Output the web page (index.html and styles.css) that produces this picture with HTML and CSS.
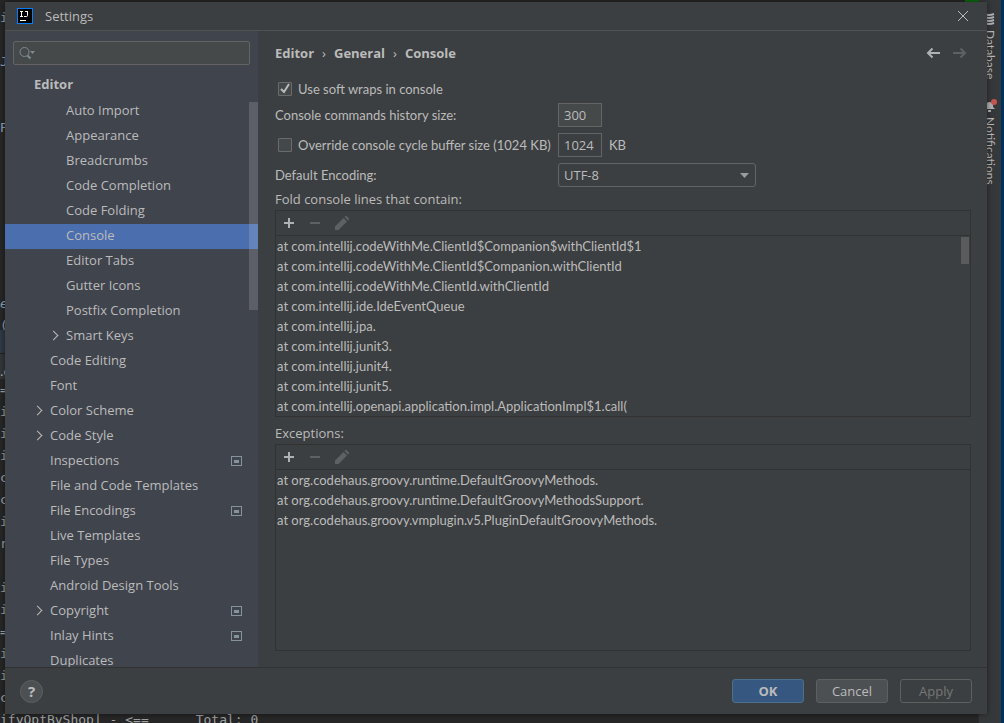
FILE: index.html
```html
<!DOCTYPE html>
<html lang="en">
<head>
    <meta charset="UTF-8">
    <meta name="viewport" content="width=device-width, initial-scale=1.0">
    <title>Settings</title>
    <link rel="stylesheet" href="styles.css">
</head>
<body>
    <div class="ide">
        <div class="editor">
            <pre class="code code-top">i

J


P







<span class="italic">e</span>
(</pre>
            <div class="panel-head"></div>
            <div class="panel-tabs">.c</div>
            <pre class="code">=
i
i
i
c
c
i
r

i
i
=
i
i
c
ifyOptByShop| - &lt;==      Total: 0</pre>
        </div>
        <div class="tool-bar">
            <svg width="12" height="14" viewBox="0 0 12 14"><path d="M0 2q5 2 10 0M0 5q5 2 10 0M0 8q5 2 10 0M0 11q5 2 10 0" fill="none" stroke="#afb1b3" stroke-width="2"/></svg>
            <span class="tool-name">Database</span>
            <svg class="bell" width="14" height="14" viewBox="0 0 14 14"><path d="M1 10l2-2V5a4 4 0 0 1 7 0v3l2 2zM5 11h3v2H5z" fill="#afb1b3"/><circle cx="11" cy="3" r="3" fill="#c75450"/></svg>
            <span class="tool-name">Notifications</span>
        </div>
        <div class="desktop-edge"></div>
        <div class="run-mark"></div>
    </div>

    <div class="dialog">
        <header class="title-bar">
            <svg width="16" height="16" viewBox="0 0 16 16"><rect x="0.5" y="0.5" width="15" height="15" fill="#000" stroke="#087cfa"/><path d="M3 3.500h3M3 8.500h3M4.500 3v5M8 3.500h3M10.500 3v4.500q0 1-1 1H7M3 12.500h6" fill="none" stroke="#fff"/></svg>
            <h1>Settings</h1>
            <button class="icon-btn" aria-label="Close">
                <svg width="12" height="12" viewBox="0 0 12 12"><path d="M1 1l10 10M11 1L1 11" fill="none" stroke="#bbb"/></svg>
            </button>
        </header>

        <div class="main">
            <nav class="sidebar">
                <label class="search">
                    <svg width="18" height="14" viewBox="0 0 18 14"><circle cx="5.500" cy="6" r="4.500" fill="none" stroke="#7f8b91"/><path d="M8.500 9.500l3 3" stroke="#7f8b91" stroke-width="2"/><path d="M11 5h5l-2.500 3z" fill="#7f8b91"/></svg>
                    <input type="text" aria-label="Search settings">
                </label>
                <h2>Editor</h2>
                <div class="tree-box">
                    <ul class="tree">
                        <li class="deep"><a href="#">Auto Import</a></li>
                        <li class="deep"><a href="#">Appearance</a></li>
                        <li class="deep"><a href="#">Breadcrumbs</a></li>
                        <li class="deep"><a href="#">Code Completion</a></li>
                        <li class="deep"><a href="#">Code Folding</a></li>
                        <li class="deep selected"><a href="#">Console</a></li>
                        <li class="deep"><a href="#">Editor Tabs</a></li>
                        <li class="deep"><a href="#">Gutter Icons</a></li>
                        <li class="deep"><a href="#">Postfix Completion</a></li>
                        <li class="deep parent"><a href="#">Smart Keys</a></li>
                        <li><a href="#">Code Editing</a></li>
                        <li><a href="#">Font</a></li>
                        <li class="parent"><a href="#">Color Scheme</a></li>
                        <li class="parent"><a href="#">Code Style</a></li>
                        <li class="project"><a href="#">Inspections</a></li>
                        <li><a href="#">File and Code Templates</a></li>
                        <li class="project"><a href="#">File Encodings</a></li>
                        <li><a href="#">Live Templates</a></li>
                        <li><a href="#">File Types</a></li>
                        <li><a href="#">Android Design Tools</a></li>
                        <li class="parent project"><a href="#">Copyright</a></li>
                        <li class="project"><a href="#">Inlay Hints</a></li>
                        <li><a href="#">Duplicates</a></li>
                    </ul>
                    <div class="tree-thumb"></div>
                </div>
            </nav>

            <section class="content">
                <div class="crumbs">
                    <a href="#">Editor</a><span>›</span><a href="#">General</a><span>›</span><a href="#">Console</a>
                    <div class="history">
                        <button class="icon-btn" aria-label="Back"><svg width="14" height="12" viewBox="0 0 14 12"><path d="M14 6H2M6.500 1.500L2 6l4.500 4.500" fill="none" stroke="#afb1b3" stroke-width="2"/></svg></button>
                        <button class="icon-btn" aria-label="Forward" disabled><svg width="14" height="12" viewBox="0 0 14 12"><path d="M0 6h12M7.500 1.500L12 6l-4.500 4.500" fill="none" stroke="#5e6163" stroke-width="2"/></svg></button>
                    </div>
                </div>

                <div class="form">
                    <div class="check wide"><input type="checkbox" id="wraps" checked><label for="wraps">Use soft wraps in console</label></div>
                    <label for="history">Console commands history size:</label>
                    <div><input class="num filled" type="text" id="history" value="300"></div>
                    <div class="check"><input type="checkbox" id="override"><label for="override">Override console cycle buffer size (1024 KB)</label></div>
                    <div><input class="num" type="text" id="buffer" value="1024" aria-label="Buffer size"><label class="unit" for="buffer">KB</label></div>
                    <label for="encoding">Default Encoding:</label>
                    <div><select id="encoding"><option>UTF-8</option></select></div>
                </div>

                <h3>Fold console lines that contain:</h3>
                <div class="list-box fold">
                    <div class="list-tools">
                        <button class="icon-btn" aria-label="Add"><svg width="12" height="12" viewBox="0 0 12 12"><path d="M1 6h10M6 1v10" stroke="#afb1b3" stroke-width="2"/></svg></button>
                        <button class="icon-btn" aria-label="Remove" disabled><svg width="12" height="12" viewBox="0 0 12 12"><path d="M1 6h10" stroke="#5e6163" stroke-width="2"/></svg></button>
                        <button class="icon-btn" aria-label="Edit" disabled><svg width="14" height="14" viewBox="0 0 14 14"><path d="M0 14v-3.500L8.500 2 12 5.500 3.500 14zM9.500 1l1-1h1L14 2.500v1l-1 1z" fill="#5e6163"/></svg></button>
                    </div>
                    <ul>
                        <li>at com.intellij.codeWithMe.ClientId$Companion$withClientId$1</li>
                        <li>at com.intellij.codeWithMe.ClientId$Companion.withClientId</li>
                        <li>at com.intellij.codeWithMe.ClientId.withClientId</li>
                        <li>at com.intellij.ide.IdeEventQueue</li>
                        <li>at com.intellij.jpa.</li>
                        <li>at com.intellij.junit3.</li>
                        <li>at com.intellij.junit4.</li>
                        <li>at com.intellij.junit5.</li>
                        <li>at com.intellij.openapi.application.impl.ApplicationImpl$1.call(</li>
                    </ul>
                    <div class="list-thumb"></div>
                </div>

                <h3>Exceptions:</h3>
                <div class="list-box">
                    <div class="list-tools">
                        <button class="icon-btn" aria-label="Add"><svg width="12" height="12" viewBox="0 0 12 12"><path d="M1 6h10M6 1v10" stroke="#afb1b3" stroke-width="2"/></svg></button>
                        <button class="icon-btn" aria-label="Remove" disabled><svg width="12" height="12" viewBox="0 0 12 12"><path d="M1 6h10" stroke="#5e6163" stroke-width="2"/></svg></button>
                        <button class="icon-btn" aria-label="Edit" disabled><svg width="14" height="14" viewBox="0 0 14 14"><path d="M0 14v-3.500L8.500 2 12 5.500 3.500 14zM9.500 1l1-1h1L14 2.500v1l-1 1z" fill="#5e6163"/></svg></button>
                    </div>
                    <ul>
                        <li>at org.codehaus.groovy.runtime.DefaultGroovyMethods.</li>
                        <li>at org.codehaus.groovy.runtime.DefaultGroovyMethodsSupport.</li>
                        <li>at org.codehaus.groovy.vmplugin.v5.PluginDefaultGroovyMethods.</li>
                    </ul>
                </div>
            </section>
        </div>

        <footer class="footer">
            <button class="help-btn" aria-label="Help">?</button>
            <button class="btn primary">OK</button>
            <button class="btn">Cancel</button>
            <button class="btn ghost" disabled>Apply</button>
        </footer>
    </div>
</body>
</html>
```

FILE: styles.css
```css
* {
    box-sizing: border-box;
}

body {
    margin: 0;
    height: 100vh;
    overflow: hidden;
    background: #2b2b2b;
    color: #bbb;
    font-family: "Open Sans", "Noto Sans", sans-serif;
    font-size: 13px;
    line-height: 20px;
}

h1, h2, h3, ul, pre {
    margin: 0;
    padding: 0;
    font-size: 13px;
    font-weight: normal;
    list-style: none;
}

a {
    color: inherit;
    text-decoration: none;
}

svg {
    display: block;
}

/* IDE window behind the dialog */
.ide {
    display: flex;
    height: 100vh;
}

.editor {
    flex: 1;
    overflow: hidden;
    background: #272727;
}

.code {
    font-family: "DejaVu Sans Mono", "Liberation Mono", monospace;
    font-size: 13px;
    line-height: 22px;
    color: #a0a3a6;
}

.code-top {
    height: 330px;
    padding-top: 7px;
    color: #8fa3b8;
    overflow: hidden;
}

.italic {
    font-style: italic;
}

.panel-head {
    height: 24px;
    background: #303a45;
    border-bottom: 1px solid #222;
}

.panel-tabs {
    height: 25px;
    padding-top: 7px;
    background: #343638;
}

.tool-bar {
    display: flex;
    flex-direction: column;
    align-items: center;
    width: 23px;
    padding-top: 12px;
    background: #36393b;
    border-left: 1px solid #2b2b2b;
}

.tool-name {
    margin-top: 4px;
    font-family: Lato, sans-serif;
    font-size: 12px;
    line-height: 16px;
    writing-mode: vertical-rl;
}

.bell {
    margin-top: 20px;
}

.desktop-edge {
    width: 3px;
    background: #00305c;
}

.run-mark {
    position: absolute;
    top: 0;
    right: 25px;
    width: 14px;
    height: 2px;
    background: #0a6b0f;
}

/* dialog */
.dialog {
    position: absolute;
    top: 2px;
    right: 17px;
    bottom: 9px;
    left: 5px;
    display: flex;
    flex-direction: column;
    background: #3c3f41;
    box-shadow: 0 0 6px rgba(0, 0, 0, 0.5);
}

.title-bar {
    display: flex;
    align-items: center;
    gap: 12px;
    height: 29px;
    padding: 0 18px 0 12px;
    border-bottom: 1px solid #515151;
}

.title-bar h1 {
    flex: 1;
}

.icon-btn {
    display: block;
    padding: 0;
    border: none;
    background: none;
    cursor: pointer;
}

.main {
    display: flex;
    flex: 1;
    min-height: 0;
    border-bottom: 1px solid #323232;
}

/* settings tree */
.sidebar {
    display: flex;
    flex-direction: column;
    width: 253px;
    padding-top: 10px;
    background: #40444d;
}

.search {
    display: flex;
    align-items: center;
    height: 24px;
    margin: 0 8px;
    padding: 0 5px;
    background: #45494a;
    border: 1px solid #646464;
    border-radius: 2px;
}

.search input {
    flex: 1;
    min-width: 0;
    border: none;
    outline: none;
    background: none;
    color: #bbb;
}

.sidebar h2 {
    padding: 9px 0 5px 29px;
    font-weight: bold;
}

.tree-box {
    position: relative;
    flex: 1;
    min-height: 0;
    overflow: hidden;
}

.tree li {
    position: relative;
    height: 25px;
    padding-left: 45px;
    line-height: 22px;
}

.tree .deep {
    padding-left: 61px;
}

.tree .selected {
    background: #4b6eaf;
}

.tree .parent::before {
    content: "";
    position: absolute;
    top: 8px;
    left: 29px;
    width: 6px;
    height: 6px;
    border-top: 1px solid #bbb;
    border-right: 1px solid #bbb;
    transform: rotate(45deg);
}

.tree .deep.parent::before {
    left: 45px;
}

.tree .project::after {
    content: "";
    position: absolute;
    top: 7px;
    right: 16px;
    width: 9px;
    height: 8px;
    background: linear-gradient(#87939a, #87939a) center / 5px 3px no-repeat;
    border: 1px solid #87939a;
}

.tree-thumb {
    position: absolute;
    top: 3px;
    right: 0;
    width: 9px;
    height: 208px;
    background: rgba(255, 255, 255, 0.15);
}

/* console page */
.content {
    display: flex;
    flex: 1;
    flex-direction: column;
    min-width: 0;
    padding: 12px 16px 16px 17px;
}

.crumbs {
    display: flex;
    align-items: center;
    height: 20px;
    font-weight: bold;
}

.crumbs span {
    padding: 0 8px;
    font-weight: normal;
}

.history {
    display: flex;
    gap: 13px;
    margin-left: auto;
    padding-right: 4px;
}

.form {
    display: grid;
    grid-template-columns: 283px 1fr;
    grid-template-rows: 22px 30px 30px 30px;
    align-items: center;
    margin-top: 15px;
}

.form label, .list-box {
    font-family: Lato, "Open Sans", sans-serif;
}

.wide {
    grid-column: 1 / 3;
}

.check {
    display: flex;
    align-items: center;
    white-space: nowrap;
}

.check input {
    appearance: none;
    flex: none;
    width: 14px;
    height: 14px;
    margin: 0 6px 0 3px;
    background: #43494a;
    border: 1px solid #6b6b6b;
    border-radius: 1px;
}

.check input:checked {
    background-image: url("data:image/svg+xml,%3Csvg xmlns='http://www.w3.org/2000/svg' viewBox='0 0 12 12'%3E%3Cpath d='M2 6l3 3 5-8' fill='none' stroke='%23bbb' stroke-width='2'/%3E%3C/svg%3E");
}

.num {
    width: 44px;
    height: 24px;
    padding: 0 5px;
    background: #3c3f41;
    border: 1px solid #646464;
    color: #bbb;
    font: inherit;
}

.filled {
    background: #45494a;
}

.unit {
    margin-left: 7px;
}

.form select {
    appearance: none;
    display: block;
    width: 198px;
    height: 24px;
    padding: 0 5px;
    border: 1px solid #646464;
    border-radius: 3px;
    background: #3c3f41 url("data:image/svg+xml,%3Csvg xmlns='http://www.w3.org/2000/svg' width='9' height='5'%3E%3Cpath d='M0 0h9L4.500 5z' fill='%239a9da0'/%3E%3C/svg%3E") no-repeat right 6px center;
    color: #bbb;
    font: inherit;
}

.content h3 {
    padding-bottom: 2px;
    line-height: 18px;
}

.list-box {
    position: relative;
    flex: 1;
    border: 1px solid #323232;
}

.fold {
    flex: none;
    margin-bottom: 7px;
}

.list-tools {
    display: flex;
    align-items: center;
    gap: 14px;
    height: 25px;
    padding-left: 7px;
    border-bottom: 1px solid #323232;
}

.list-box li {
    height: 20px;
    padding-left: 1px;
    line-height: 20px;
}

.list-thumb {
    position: absolute;
    top: 26px;
    right: 1px;
    width: 8px;
    height: 27px;
    background: #595b5d;
}

/* buttons row */
.footer {
    display: flex;
    align-items: center;
    gap: 12px;
    height: 46px;
    padding: 0 15px;
}

.help-btn {
    width: 23px;
    height: 23px;
    margin-right: auto;
    padding: 0;
    background: #4c5052;
    border: 1px solid #5e6060;
    border-radius: 50%;
    color: #bbb;
    font: bold 15px "Noto Sans", sans-serif;
}

.btn {
    width: 72px;
    height: 24px;
    padding: 0;
    background: #4c5052;
    border: 1px solid #5e6060;
    border-radius: 3px;
    color: #bbb;
    font: inherit;
}

.primary {
    background: #365880;
    border-color: #4c708c;
    font-weight: bold;
}

.ghost {
    background: none;
    color: #777;
}
```
